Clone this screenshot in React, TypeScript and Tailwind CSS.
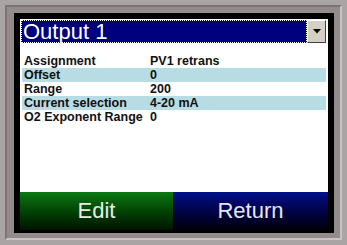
import React from 'react';

const rows = [
  { label: 'Assignment', value: 'PV1 retrans' },
  { label: 'Offset', value: '0' },
  { label: 'Range', value: '200' },
  { label: 'Current selection', value: '4-20 mA' },
  { label: 'O2 Exponent Range', value: '0' },
];

export default function App() {
  return (
    <div className="w-[347px] h-[245px] bg-[#aba4a4] p-[5px] font-['Liberation_Sans',Arial,sans-serif]">
      <div className="w-full h-full border-t-2 border-l-2 border-[#7d7575] border-b-2 border-r-2 border-b-[#c9c3c3] border-r-[#c9c3c3] bg-[#948c8c] pt-[6px] pl-[7px] pr-[6px] pb-[5px]">
        <div className="w-full h-full bg-black pt-[6px] px-[6px] pb-[3px] flex flex-col">
          {/* main panel */}
          <div className="flex-1 bg-white flex flex-col">
            <div className="flex h-[25px] p-[1px] pr-[2px]">
              <div className="flex-1 bg-[#00007f] border border-dotted border-white flex items-center pl-[1px]">
                <span className="text-[22px] leading-none text-white">Output 1</span>
              </div>
              <div className="w-[19px] bg-[#d4d0c8] border border-t-white border-l-white border-r-[#404040] border-b-[#404040] flex items-center justify-center">
                <svg width="8" height="5" viewBox="0 0 8 5">
                  <path d="M0 0H8L4 4.5Z" fill="#000" />
                </svg>
              </div>
            </div>
            <div className="mt-[10px] px-[2px]">
              {rows.map((r, i) => (
                <div
                  key={r.label}
                  className={`flex h-[14px] items-center text-[12.5px] font-bold text-[#111] ${i % 2 === 1 ? 'bg-[#b8dce4]' : ''}`}
                >
                  <span className="w-[128px] pl-[2px]">{r.label}</span>
                  <span>{r.value}</span>
                </div>
              ))}
            </div>
          </div>
          {/* buttons */}
          <div className="flex h-[38px]">
            <div className="w-[153px] bg-gradient-to-b from-[#0b7a12] to-[#001400] flex items-center justify-center">
              <span className="text-[22px] text-[#e6ece6] leading-none">Edit</span>
            </div>
            <div className="flex-1 bg-gradient-to-b from-[#00108c] to-[#00000e] flex items-center justify-center">
              <span className="text-[22px] text-[#e6e6ee] leading-none">Return</span>
            </div>
          </div>
        </div>
      </div>
    </div>
  );
}
